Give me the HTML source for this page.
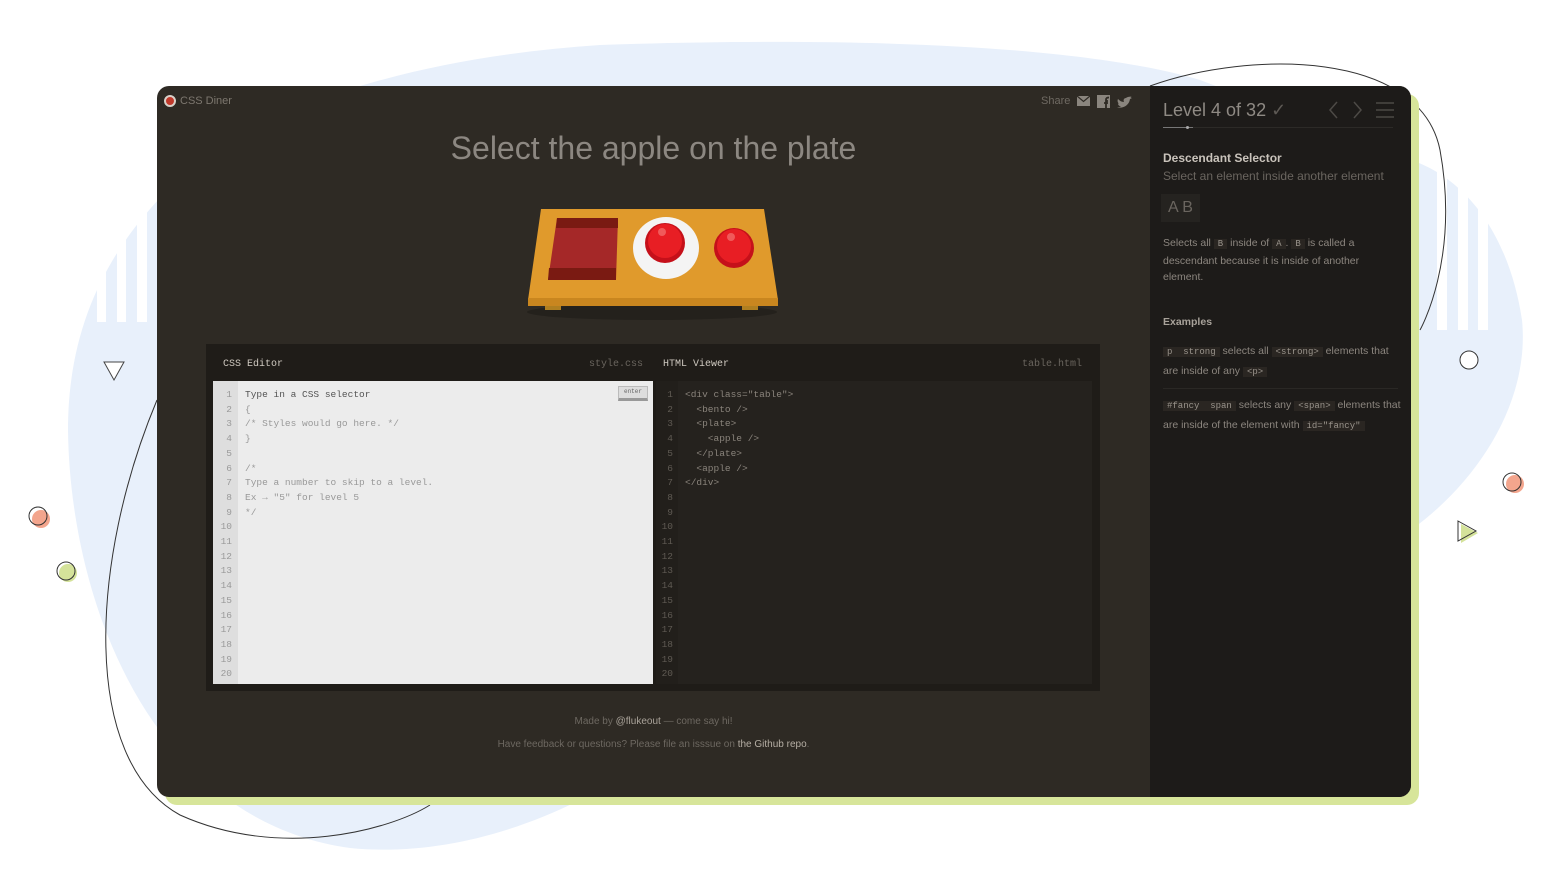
<!DOCTYPE html>
<html><head><meta charset="utf-8"><style>
*{margin:0;padding:0;box-sizing:border-box}
body{width:1568px;height:882px;background:#fff;position:relative;overflow:hidden;font-family:"Liberation Sans",sans-serif}
.abs{position:absolute}
.mono{font-family:"Liberation Mono",monospace}
.win{left:157px;top:86px;width:1254px;height:711px;border-radius:12px;overflow:hidden;background:#2e2a24}
.side{left:993px;top:0;width:261px;height:711px;background:#1d1b19}
.code{background:#2a2622;color:#9a948c;padding:0 4px;font-family:"Liberation Mono",monospace;font-size:9px}
.ln{position:absolute;font-size:9.5px;line-height:14.7px}
</style></head><body>
<svg class="abs" style="left:0;top:0" width="1568" height="882">
<path d="M600 45 C900 35 1100 50 1200 80 L1411 160 C1470 180 1510 240 1522 320 C1530 400 1480 480 1411 530 L1411 797 L580 800 C500 840 420 855 350 848 C150 820 70 600 68 430 C68 300 130 220 200 160 C300 90 450 55 600 45 Z" fill="#e8f0fb"/>
<g fill="#fff">
<rect x="0" y="0" width="97" height="253"/>
<rect x="97" y="0" width="9" height="322"/><rect x="117" y="0" width="9" height="322"/><rect x="137" y="0" width="10" height="322"/>
<rect x="1437" y="100" width="10" height="230"/><rect x="1458" y="100" width="10" height="230"/><rect x="1478" y="100" width="10" height="230"/>
</g>
<path d="M1150 86 C1250 50 1420 50 1440 150 C1460 260 1420 330 1420 330" fill="none" stroke="#333" stroke-width="1"/>
<path d="M157 400 C90 560 80 760 180 815 C280 860 390 830 430 805" fill="none" stroke="#333" stroke-width="1"/>
<rect x="165" y="94" width="1254" height="711" rx="12" fill="#d7e59a"/>
<path d="M104 362 L124 362 L114 380 Z" fill="#fff" stroke="#444" stroke-width="1"/>
<circle cx="41" cy="519" r="9" fill="#f3a58d"/><circle cx="38" cy="516" r="9" fill="none" stroke="#333"/>
<circle cx="68" cy="573" r="9" fill="#d4e29a"/><circle cx="66" cy="571" r="9" fill="none" stroke="#333"/>
<circle cx="1469" cy="360" r="9" fill="#fff" stroke="#333"/>
<circle cx="1515" cy="484" r="9" fill="#f3a58d"/><circle cx="1512" cy="482" r="9" fill="none" stroke="#333"/>
<path d="M1461 524 L1478 533 L1461 543 Z" fill="#d4e29a"/><path d="M1458 521 L1476 531 L1458 541 Z" fill="none" stroke="#333"/>
</svg>
<div class="abs win">
 <div class="abs" style="left:7px;top:9px;width:12px;height:12px;border-radius:50%;background:#c0392b;border:2px solid #d8d0c8"></div>
 <div class="abs" style="left:23px;top:9px;font-size:11px;color:#7d776f">CSS Diner</div>
 <div class="abs" style="left:884px;top:9px;font-size:11px;color:#6f6a63">Share</div>
 <svg class="abs" style="left:920px;top:9px" width="60" height="14">
  <rect x="0" y="1" width="13" height="10" fill="#8a857e"/><path d="M0 1 L6.5 6.5 L13 1" fill="none" stroke="#2e2a24" stroke-width="1.2"/>
  <rect x="20" y="0" width="13" height="13" fill="#8a857e"/><path d="M29 13 V6 H31 M27 8 H31 M29 13 V5 C29 3 30 2.5 32 2.5" fill="none" stroke="#2e2a24" stroke-width="1.8"/>
  <path d="M40 10 C45 12 52 9 53 2 L55 1 L53.5 0.5 L54.5 -0.5 C52 0 51 -0.5 49 1 C47 1 46 3 47 5 C44 5 42 3 41 2 C40 4 41 6 42 6.5 L41 6.5 C41 8 42 9 44 9.5 C43 10 41.5 10 40 10 Z" fill="#8a857e" transform="translate(0,2)"/>
 </svg>
 <div class="abs" style="left:0;width:993px;top:44px;text-align:center;font-size:32px;color:#8c8781">Select the apple on the plate</div>
 <svg class="abs" style="left:360px;top:118px" width="270" height="120">
  <ellipse cx="135" cy="108" rx="125" ry="8" fill="#24211c"/>
  <rect x="28" y="98" width="16" height="8" fill="#b07f20"/><rect x="225" y="98" width="16" height="8" fill="#b07f20"/>
  <path d="M24 5 L247 5 L261 96 L11 96 Z" fill="#e09a2c"/>
  <rect x="11" y="94" width="250" height="8" fill="#c9861f"/>
  <path d="M40 14 L101 14 L99 76 L31 76 Z" fill="#a52828"/>
  <path d="M40 14 L101 14 L101 24 L39 24 Z" fill="#7a1a12"/><path d="M32 64 L99 64 L99 76 L31 76 Z" fill="#7a1a12"/>
  <ellipse cx="149" cy="44" rx="33" ry="31" fill="#f4f4f4"/>
  <circle cx="148" cy="39" r="20" fill="#c5101a"/><circle cx="148" cy="37" r="17" fill="#e81e24"/><circle cx="145" cy="28" r="4" fill="#f05a5a"/>
  <circle cx="217" cy="44" r="20" fill="#c5101a"/><circle cx="217" cy="42" r="17" fill="#e81e24"/><circle cx="214" cy="33" r="4" fill="#f05a5a"/>
 </svg>
 <div class="abs" style="left:49px;top:258px;width:894px;height:347px;background:#1f1c18"></div>
 <div class="abs mono" style="left:66px;top:273px;font-size:10px;color:#cfc9c0">CSS Editor</div>
 <div class="abs mono" style="left:432px;top:273px;font-size:10px;color:#6a655e">style.css</div>
 <div class="abs mono" style="left:506px;top:273px;font-size:10px;color:#cfc9c0">HTML Viewer</div>
 <div class="abs mono" style="left:865px;top:273px;font-size:10px;color:#6a655e">table.html</div>
 <div class="abs" style="left:56px;top:295px;width:440px;height:303px;background:#ececec"></div>
 <div class="abs" style="left:56px;top:295px;width:25px;height:303px;background:#dedede"></div>
 <div class="abs mono" style="left:461px;top:300px;width:30px;height:15px;background:#ddd;border:1px solid #bbb;border-bottom:3px solid #999;font-size:6px;text-align:center;color:#666;line-height:10px">enter</div>
 <div class="abs" style="left:499px;top:295px;width:436px;height:303px;background:#25221e"></div>
 <div class="abs" style="left:499px;top:295px;width:22px;height:303px;background:#221f1b"></div>
 <div class="ln mono" style="left:60px;top:302px;color:#9a9a9a;text-align:right;width:15px">1<br>2<br>3<br>4<br>5<br>6<br>7<br>8<br>9<br>10<br>11<br>12<br>13<br>14<br>15<br>16<br>17<br>18<br>19<br>20</div>
 <div class="ln mono" style="left:88px;top:302px;color:#999;white-space:pre"><span style="color:#555">Type in a CSS selector</span>
{
/* Styles would go here. */
}

/*
Type a number to skip to a level.
Ex → "5" for level 5
*/</div>
 <div class="ln mono" style="left:501px;top:302px;color:#5f5a53;text-align:right;width:15px">1<br>2<br>3<br>4<br>5<br>6<br>7<br>8<br>9<br>10<br>11<br>12<br>13<br>14<br>15<br>16<br>17<br>18<br>19<br>20</div>
 <div class="ln mono" style="left:528px;top:302px;color:#8a847c;white-space:pre">&lt;div class="table"&gt;
  &lt;bento /&gt;
  &lt;plate&gt;
    &lt;apple /&gt;
  &lt;/plate&gt;
  &lt;apple /&gt;
&lt;/div&gt;</div>
 <div class="abs" style="left:0;width:993px;top:630px;text-align:center;font-size:10px;color:#6d6861">Made by <b style="color:#aaa39a;font-weight:normal">@flukeout</b> — come say hi!</div>
 <div class="abs" style="left:0;width:993px;top:653px;text-align:center;font-size:10px;color:#6d6861">Have feedback or questions? Please file an isssue on <span style="color:#b5aea4">the Github repo</span>.</div>
 <div class="abs side">
  <div class="abs" style="left:13px;top:14px;font-size:18px;color:#8f8a84">Level 4 of 32 <span style="color:#5d5954">✓</span></div>
  <div class="abs" style="left:13px;top:41px;width:230px;height:1px;background:#2c2a27"></div>
  <div class="abs" style="left:13px;top:41px;width:30px;height:1px;background:#777"></div>
  <div class="abs" style="left:36px;top:40px;width:3px;height:3px;border-radius:50%;background:#aaa"></div>
  <svg class="abs" style="left:178px;top:14px" width="70" height="20">
   <path d="M9 2 L2 10 L9 18 M26 2 L33 10 L26 18" fill="none" stroke="#4d4a46" stroke-width="1.5"/>
   <path d="M48 3 H66 M48 10 H66 M48 17 H66" stroke="#4d4a46" stroke-width="1.5"/>
  </svg>
  <div class="abs" style="left:13px;top:65px;font-size:12px;font-weight:bold;color:#c9c3bb">Descendant Selector</div>
  <div class="abs" style="left:13px;top:83px;font-size:12px;color:#6a655f">Select an element inside another element</div>
  <div class="abs" style="left:11px;top:108px;width:39px;height:28px;background:#252320;font-size:16px;color:#6a655f;padding:5px 0 0 7px">A B</div>
  <div class="abs" style="left:13px;top:149px;width:215px;font-size:10.5px;line-height:16.5px;color:#8c867f">Selects all <span class="code">B</span> inside of <span class="code">A</span>. <span class="code">B</span> is called a descendant because it is inside of another element.</div>
  <div class="abs" style="left:13px;top:230px;font-size:10.5px;font-weight:bold;color:#a8a29a">Examples</div>
  <div class="abs" style="left:13px;top:256px;width:240px;font-size:10.5px;line-height:19px;color:#8c867f"><span class="code">p &nbsp;strong</span> selects all <span class="code">&lt;strong&gt;</span> elements that are inside of any <span class="code">&lt;p&gt;</span></div>
  <div class="abs" style="left:13px;top:302px;width:235px;height:1px;background:#2a2825"></div>
  <div class="abs" style="left:13px;top:310px;width:240px;font-size:10.5px;line-height:19px;color:#8c867f"><span class="code">#fancy &nbsp;span</span> selects any <span class="code">&lt;span&gt;</span> elements that are inside of the element with <span class="code">id="fancy"</span></div>
 </div>
</div>
</body></html>
